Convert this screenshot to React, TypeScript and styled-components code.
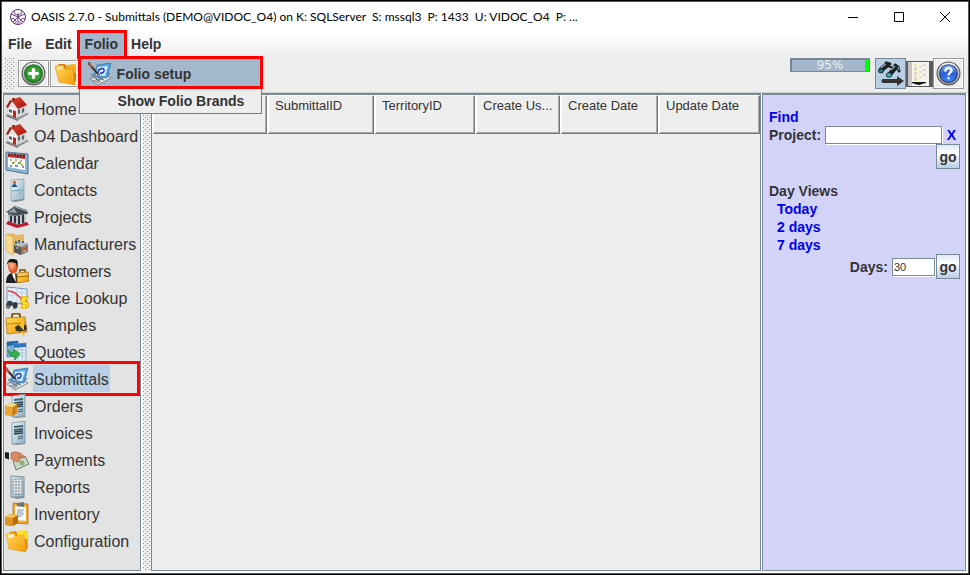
import React from "react";
import styled, { createGlobalStyle, css } from "styled-components";

const GlobalStyle = createGlobalStyle`
  *, *::before, *::after { box-sizing: border-box; }
  html, body, #root { height: 100%; }
  body { margin: 0; font-family: "Liberation Sans", Arial, sans-serif; color: #333; }
  button, input { font: inherit; color: inherit; }
  a { color: #0000f0; text-decoration: none; }
`;

const steel = "#7a8a99";
const selection = "#b8cfe5";
const menuBlue = "#a3b8cc";

const Window = styled.div`
  display: flex;
  flex-direction: column;
  height: 100vh;
  border: 1px solid #000;
  outline: 1px solid #555;
  outline-offset: -2px;
  padding: 1px;
  background: #eee;
`;

const TitleBar = styled.header`
  display: flex;
  align-items: center;
  height: 30px;
  padding-left: 7px;
  background: #fff;
`;

const Title = styled.h1`
  flex: 1;
  margin: 0 0 0 4px;
  font: 400 12px/20px Lato, "Open Sans", sans-serif;
  color: #000;
  white-space: pre;
`;

const CaptionButton = styled.button`
  display: grid;
  place-items: center;
  width: 46px;
  height: 28px;
  padding: 0;
  border: 0;
  background: none;
`;

const MenuBar = styled.nav`
  display: flex;
  height: 25px;
  background: linear-gradient(#fff, #eee);
`;

const MenuAnchor = styled.div`
  position: relative;
`;

const redFrame = css`
  &::after {
    content: "";
    position: absolute;
    inset: -2px;
    border: 3px solid #f00;
    pointer-events: none;
  }
`;

const MenuButton = styled.button<{ $open?: boolean }>`
  position: relative;
  height: 25px;
  padding: 0 7px 2px 6px;
  border: 0;
  background: ${(p) => (p.$open ? menuBlue : "none")};
  font-size: 14px;
  font-weight: 700;
  ${(p) => p.$open && redFrame}
`;

const Popup = styled.div`
  position: absolute;
  z-index: 2;
  top: 25px;
  left: 0;
  width: 183px;
  border: 1px solid #6382bf;
  background: #eee;
`;

const PopupItem = styled.button<{ $active?: boolean }>`
  position: relative;
  display: flex;
  align-items: center;
  gap: 5px;
  width: 100%;
  height: ${(p) => (p.$active ? 29 : 26)}px;
  padding: ${(p) => (p.$active ? "2px 0 0 8px" : "2px 0 0 38px")};
  border: 0;
  background: ${(p) => (p.$active ? menuBlue : "none")};
  font-size: 14px;
  font-weight: 700;
  white-space: nowrap;
  ${(p) => p.$active && redFrame}
`;

const dots = css`
  background-image: conic-gradient(from 270deg at 1px 1px, #8492a2 25%, transparent 0),
    conic-gradient(from 270deg at 1px 1px, #8492a2 25%, transparent 0);
  background-size: 4px 4px;
  background-position: 0 0, 2px 2px;
`;

const ToolBar = styled.div`
  display: flex;
  align-items: flex-start;
  height: 36px;
  padding: 1px 4px 0 3px;
  border-bottom: 1px solid #ccc;
`;

const Grip = styled.div`
  width: 10px;
  height: 32px;
  margin-right: 3px;
  ${dots}
`;

const ToolButton = styled.button<{ $pressed?: boolean; $low?: boolean }>`
  display: grid;
  place-items: center;
  width: 31px;
  height: ${(p) => (p.$low ? 27 : 31)}px;
  margin: ${(p) => (p.$low ? "2px 1px 0 0" : "0")};
  padding: 0;
  border: 1px solid ${(p) => (p.$pressed ? steel : "#999")};
  background: ${(p) => (p.$pressed ? selection : "#eee")};
  box-shadow: ${(p) => (p.$pressed ? "none" : "inset 0 0 0 1px #fff")};
`;

const LedgerButton = styled.button`
  display: grid;
  place-items: center;
  width: 27px;
  height: 31px;
  padding: 0;
  border: 0;
  background: none;
`;

const Spacer = styled.div`
  flex: 1;
`;

const Meter = styled.div`
  width: 80px;
  height: 14px;
  margin-right: 5px;
  border: 1px solid ${steel};
  background: linear-gradient(to right, ${menuBlue} 74px, #0f0 74px);
  box-shadow: inset 1px 1px #6382bf;
  color: #eee;
  font: 12px/13px "DejaVu Sans", sans-serif;
  text-align: center;
`;

const Main = styled.main`
  display: flex;
  flex: 1;
  min-height: 0;
  background: #fff;
  padding: 0 2px 2px 1px;
`;

const Sidebar = styled.aside`
  flex: none;
  width: 138px;
  border: 1px solid ${steel};
  border-top-width: 2px;
  background: #e3e3e3;
`;

const NavList = styled.ul`
  margin: 0;
  padding: 0;
  list-style: none;
`;

const NavLink = styled.a<{ $selected?: boolean }>`
  position: relative;
  display: flex;
  align-items: center;
  gap: 4px;
  height: 27px;
  padding-left: 1px;
  color: #333;
  font-size: 16px;
  white-space: nowrap;
  ${(p) =>
    p.$selected &&
    css`
      &::after {
        content: "";
        position: absolute;
        inset: -4px 0 -4px -1px;
        border: 3px solid #f00;
      }
    `}
`;

const NavLabel = styled.span<{ $selected?: boolean }>`
  padding: 2px 1px 0 1px;
  line-height: 25px;
  background: ${(p) => (p.$selected ? selection : "none")};
`;

const Divider = styled.div`
  flex: none;
  width: 8px;
  margin-left: 2px;
  border-top: 2px solid ${steel};
  background-color: #eee;
  ${dots}
`;

const TablePane = styled.section`
  flex: 1;
  min-width: 0;
  border: 1px solid ${steel};
  border-top-width: 2px;
  background: #eee;
`;

const Grid = styled.table`
  width: 100%;
  table-layout: fixed;
  border-collapse: separate;
  border-spacing: 0;
`;

const HeadCell = styled.th`
  height: 39px;
  padding: 2px 6px;
  overflow: hidden;
  border: solid;
  border-width: 1px 1px 1px 2px;
  border-color: #fff #777 #777 #fff;
  box-shadow: inset -1px -1px #aaa;
  font-size: 13px;
  font-weight: 400;
  line-height: 15px;
  text-align: left;
  text-overflow: ellipsis;
  vertical-align: top;
  white-space: nowrap;
`;

const FindPane = styled.aside`
  flex: none;
  width: 204px;
  margin-left: 1px;
  padding: 13px 5px 12px 6px;
  border: 1px solid ${steel};
  border-top-width: 2px;
  background: #d3d3fa;
  font-size: 14px;
  font-weight: 700;
  line-height: 18px;
`;

const Heading = styled.h2<{ $link?: boolean }>`
  margin: 0;
  font-size: 14px;
  line-height: 18px;
  color: ${(p) => (p.$link ? "#0000f0" : "#333")};
`;

const Line = styled.div<{ $end?: boolean }>`
  display: flex;
  align-items: center;
  justify-content: ${(p) => (p.$end ? "flex-end" : "flex-start")};
`;

const TextBox = styled.input<{ $short?: boolean }>`
  flex: ${(p) => (p.$short ? "none" : "1")};
  width: ${(p) => (p.$short ? 43 : 60)}px;
  min-width: 0;
  height: 18px;
  margin-left: 4px;
  padding: 0 1px;
  border: 1px solid ${steel};
  border-radius: 0;
  box-shadow: 1px 1px #fff;
  background: #fff;
  font-size: 11px;
  font-weight: 400;
`;

const ClearLink = styled.a`
  padding: 0 4px 0 5px;
`;

const GoButton = styled.button`
  width: 24px;
  height: 25px;
  margin-left: 1px;
  padding: 0;
  border: 1px solid ${steel};
  background: linear-gradient(#dde8f3, #fff 35%, ${selection});
  font-weight: 700;
`;

const DayViews = styled.div`
  margin-top: 13px;
`;

const DayList = styled.ul`
  margin: 0;
  padding: 0 0 0 8px;
  list-style: none;
`;

/* ---------- drawings ---------- */

const Svg = styled.svg`
  display: block;
  flex: none;
`;

const HiddenSvg = styled.svg`
  position: absolute;
`;

function Icon({ children, size = 24 }: { children: React.ReactNode; size?: number }) {
  return (
    <Svg width={size} height={size} viewBox="0 0 24 24" aria-hidden="true">
      {children}
    </Svg>
  );
}

function Gradients() {
  return (
    <HiddenSvg width="0" height="0" aria-hidden="true">
      <defs>
        <linearGradient id="gold" x1="0" y1="0" x2="1" y2="1">
          <stop offset="0" stopColor="#ffd95a" />
          <stop offset="1" stopColor="#f39a08" />
        </linearGradient>
        <linearGradient id="paper" x1="0" y1="0" x2="1" y2="1">
          <stop offset="0" stopColor="#eaf4f8" />
          <stop offset="1" stopColor="#8fb0c1" />
        </linearGradient>
        <linearGradient id="roof" x1="0" y1="0" x2="1" y2="1">
          <stop offset="0" stopColor="#e04a36" />
          <stop offset="1" stopColor="#a01008" />
        </linearGradient>
        <radialGradient id="green">
          <stop offset="0" stopColor="#5fc64c" />
          <stop offset="1" stopColor="#1c8f22" />
        </radialGradient>
        <linearGradient id="blue" x1="0" y1="0" x2="0" y2="1">
          <stop offset="0" stopColor="#8db4f5" />
          <stop offset="0.5" stopColor="#2b5fd6" />
          <stop offset="1" stopColor="#3f86f5" />
        </linearGradient>
        <linearGradient id="silver" x1="0" y1="0" x2="0" y2="1">
          <stop offset="0" stopColor="#f6f6f6" />
          <stop offset="1" stopColor="#8a8a8a" />
        </linearGradient>
        <radialGradient id="skin" cx="0.4" cy="0.4">
          <stop offset="0" stopColor="#ffc09a" />
          <stop offset="1" stopColor="#e0521c" />
        </radialGradient>
      </defs>
    </HiddenSvg>
  );
}

const Home = () => (
  <Icon>
    <path d="M1 18l12 5 11-6-11-5z" fill="#8d908b" />
    <path d="M1 18l12 5v1L1 19z" fill="#55585a" />
    <path d="M3 9l9 2v10l-9-4z" fill="#fafafa" stroke="#aaa" strokeWidth=".5" />
    <path d="M12 11l9-3v9l-9 4z" fill="#d4d4d4" />
    <path d="M2 9l4-6 7 7-1 2z" fill="#e4e4e4" />
    <path d="M6 3l9-3 7 8-9 4z" fill="url(#roof)" />
    <path d="M1 10l4-7 2 1-4 7z" fill="#9f1d13" />
    <path d="M7 1h3v3L7 5z" fill="#a03022" />
    <path d="M8 13l3 1v7l-3-1z" fill="#c3261b" />
    <path d="M4 12l3 1v3l-3-1zM13 13l2-1v4l-2 1zM17 12l2-1v4l-2 1z" fill="#56616a" />
  </Icon>
);

const Calendar = () => (
  <Icon>
    <path d="M1 1l22 2v20L1 19z" fill="#8fb3cd" stroke="#4d7998" />
    <path d="M3 5l17 1v13L3 16z" fill="#fff" />
    <path d="M3 3l17 1v4L3 6z" fill="#c62c22" />
    <path d="M4 2v3M7 2v3M10 2v3M13 3v3M16 3v3M19 3v3" stroke="#222" strokeWidth="1" />
    <path d="M5 9h2M10 9h2M15 10h2" stroke="#e99" strokeWidth="2" />
    <path d="M7 12h2M13 12h3" stroke="#6cb350" strokeWidth="2" />
    <path d="M5 15h2M10 15h3M17 16h2" stroke="#6f9dd4" strokeWidth="2" />
    <path d="M9 11h1M16 14h2" stroke="#e7a42e" strokeWidth="2" />
  </Icon>
);

const Contacts = () => (
  <Icon>
    <path d="M6 2l13-1v20l-13 2z" fill="url(#paper)" stroke="#7f9dae" strokeWidth=".7" />
    <path d="M7 3h5v9H7z" fill="#d5e8f2" />
    <circle cx="9.500" cy="4.500" r="1.700" fill="#d8612c" />
    <path d="M7 9c0-4 5-4 5 0z" fill="#27508a" />
    <path d="M7 13l11-1M15 14v2" stroke="#6fa0bb" />
    <path d="M6 23l13-2 1 1-10 2z" fill="#7c8489" />
  </Icon>
);

const Projects = () => (
  <Icon>
    <path d="M1 19l11 4 12-3-2-3-9 2-10-3z" fill="#c3182b" />
    <path d="M3 8h18v10l-9 2-9-4z" fill="#71797f" />
    <path d="M1 7l9-6 12 4 1 4-13 1z" fill="#464e55" />
    <path d="M3 7l6-4 3 5z" fill="#9ba4aa" />
    <path d="M4 10v6M8 11v7M12 11v8M16 10v9M20 9v8" stroke="#bcc4c9" strokeWidth="2" />
    <path d="M6 11v6M10 11v7M14 11v8M18 10v8" stroke="#30363c" strokeWidth="2" />
    <path d="M10 2l12 4" stroke="#aeb6bb" />
  </Icon>
);

const Manufacturers = () => (
  <Icon>
    <path d="M1 2l8-1 2 2 8-1v19H7z" fill="#e5b863" />
    <path d="M1 2l7 3v18l-7-4z" fill="#f7d993" stroke="#c39743" strokeWidth=".5" />
    <path d="M9 13l7-3 7 2v8l-7 3-7-3z" fill="#8c8176" />
    <path d="M9 13l7 2v8l-7-3z" fill="#5c5650" />
    <path d="M9 13l7-3 7 2-7 3z" fill="#b7bec1" />
    <path d="M16 17l7-2v2l-7 3z" fill="#be5a36" />
    <path d="M11 12v-3M14 11V8M18 11V9" stroke="#4b707e" strokeWidth="2" />
    <path d="M11 16h3M18 19h3" stroke="#b5d0d8" />
  </Icon>
);

const Customers = () => (
  <Icon>
    <path d="M1 24c0-7 3-10 7-10s7 3 7 10z" fill="#202024" />
    <path d="M7 14h3l1 9-3-5z" fill="#fff" />
    <ellipse cx="8" cy="7.500" rx="5" ry="7" fill="url(#skin)" />
    <path d="M2 6C2-1 8-1 12 1c1 2 1 5 0 7l-1-4-7-1z" fill="#17171a" />
    <path d="M12 14l11-1 1 9-12 2z" fill="url(#gold)" stroke="#9d6a0a" strokeWidth=".7" />
    <path d="M15 13v-2h5v2" fill="none" stroke="#76500c" strokeWidth="1.500" />
    <path d="M12 18l12-1" stroke="#9d6a0a" />
  </Icon>
);

const PriceLookup = () => (
  <Icon>
    <path d="M2 1l20 2v16L2 15z" fill="#e3eef6" stroke="#7898b0" />
    <path d="M2 5l20 2M2 9l20 2M7 2v14M12 2v15M17 3v15" stroke="#b4cddd" strokeWidth=".7" />
    <path d="M3 5c7 0 11 4 15 11" fill="none" stroke="#de3d43" strokeWidth="1.500" />
    <path d="M1 21c0-5 2-7 5-6l2 2 3-1c2 1 2 3 1 6l-3 1-2-4-3 3z" fill="#33393e" />
    <circle cx="3" cy="21" r="2" fill="#67717a" />
    <path d="M23 13c-6-3-8 3-3 4s2 5-4 3M19 10v13" fill="none" stroke="#d99708" strokeWidth="4" />
    <path d="M23 13c-6-3-8 3-3 4s2 5-4 3M19 10v13" fill="none" stroke="#ffe234" strokeWidth="2" />
  </Icon>
);

const Samples = () => (
  <Icon>
    <path d="M7 5V2c0-2 8-2 8 0v3" fill="none" stroke="#8a5a10" strokeWidth="2" />
    <path d="M1 5l19-1 2 15-20 2z" fill="url(#gold)" stroke="#a66b0b" strokeWidth=".7" />
    <path d="M1 11l20-1" stroke="#c17f12" />
    <path d="M10 14l5-3 6 1 1 4-4 3-7-1z" fill="#37342a" />
    <path d="M15 12l3-2v5zM17 18l2 5" stroke="#f5c82b" strokeWidth="2" fill="#f5c82b" />
  </Icon>
);

const Quotes = () => (
  <Icon>
    <path d="M2 2l11-1v15l-11 1z" fill="#7fb0d8" stroke="#3f6f9b" strokeWidth=".7" />
    <path d="M2 2l11-1v4L2 6z" fill="#2467ac" />
    <path d="M9 4l12-1v18l-12 1z" fill="#e4eff6" stroke="#6f99b7" strokeWidth=".7" />
    <path d="M9 4l12-1v4L9 8z" fill="#2e77be" />
    <path d="M11 10h9M11 13h9M11 16h9M13 8v13M17 8v13" stroke="#9bbbd0" strokeWidth=".8" />
    <path d="M3 10c2 2 4 3 6 2V9l6 5-5 6v-3c-4 0-7-3-7-7z" fill="#38b34a" stroke="#19782a" strokeWidth=".6" />
  </Icon>
);

const Submittals = () => (
  <Icon>
    <path d="M2 17l13-6 8 5-13 7z" fill="#dfe6ea" stroke="#67767e" strokeWidth=".8" />
    <path d="M3 13l13-6 6 5-12 7z" fill="#93a8b4" stroke="#53636c" strokeWidth=".6" />
    <path d="M9 3l14-2-4 15-13-2z" fill="#4ba4e8" stroke="#3d6e93" strokeWidth=".7" />
    <path d="M10 5l10-1-3 10-9-1z" fill="#d8eefb" />
    <path d="M10 11c0-5 7-6 6-2-1 3-4 3-3 1" fill="none" stroke="#2741b8" strokeWidth="1.600" />
    <path d="M1 0l8 10 3 3-3-1L0 2z" fill="#35221c" stroke="#5a3a2c" strokeWidth=".6" />
    <path d="M1 1l3 4" stroke="#b5664a" strokeWidth="1.500" />
    <path d="M5 18l6 3M8 17l5 3M11 16l5 2" stroke="#59646b" strokeWidth=".9" />
  </Icon>
);

const DocumentShape = () => (
  <>
    <path d="M7 2l13-2v22l-13 1z" fill="url(#paper)" stroke="#6f8d9c" strokeWidth=".7" />
    <path d="M9 5l9-1v2L9 7z" fill="#3d6470" />
    <path d="M9 9l9-1M9 11l9-1M9 13l9-1" stroke="#2c4752" strokeWidth="1.300" />
    <path d="M13 16l5-1M13 18l5-1" stroke="#456874" />
    <path d="M7 23l13-1 1 1-9 1z" fill="#8c9499" />
  </>
);

const Orders = () => (
  <Icon>
    <DocumentShape />
    <path d="M0 12l4-3 8 1v9l-4 3-8-1z" fill="#cf8316" />
    <path d="M0 12l8 1v9l-8-1z" fill="#eca535" />
    <path d="M0 12l4-3 8 1-4 3z" fill="#fad989" />
    <path d="M8 13v9" stroke="#a8640a" strokeWidth=".7" />
  </Icon>
);

const Invoices = () => (
  <Icon>
    <DocumentShape />
  </Icon>
);

const Payments = () => (
  <Icon>
    <path d="M0 4l5 1v7l-5-2z" fill="#1c1d22" />
    <path d="M4 5h2v7H4z" fill="#e8e8ea" />
    <path d="M8 13l12-5 4 8-13 6z" fill="#c9dac0" stroke="#4d6a47" strokeWidth=".8" />
    <circle cx="17" cy="15" r="2.500" fill="#8eac84" />
    <path d="M6 5c5-2 9-1 14 4l-2 1-4-2c2 3 1 5-1 6-3 0-5-3-7-3z" fill="#d98a62" stroke="#9c5535" strokeWidth=".6" />
  </Icon>
);

const Reports = () => (
  <Icon>
    <path d="M6 1l13 1v20H6z" fill="url(#paper)" stroke="#5f7985" strokeWidth=".8" />
    <path d="M8 4h9v15H8z" fill="#fff" />
    <path d="M8 4h9M8 7h9M8 10h9M8 13h9M8 16h9M8 19h9M8 4v15M11 4v15M14 4v15M17 4v15" stroke="#7d8c94" strokeWidth=".8" />
    <path d="M5 22h14l1 1-8 1z" fill="#8c9499" />
  </Icon>
);

const Inventory = () => (
  <Icon>
    <path d="M8 1l15 1v20l-15-1z" fill="#efa92c" stroke="#a9680a" strokeWidth=".7" />
    <path d="M10 4l11 1v14l-11-1z" fill="#f4f8fa" />
    <path d="M12 1l7-1v5l-7-1z" fill="#6b7880" />
    <path d="M12 8h7M12 10h6M12 12h7M12 14h5" stroke="#8698a3" />
    <path d="M0 15l5-3 8 1v8l-5 3-8-1z" fill="#b96c0c" />
    <path d="M0 15l8 1v8l-8-1z" fill="#df9424" />
    <path d="M0 15l5-3 8 1-5 3z" fill="#f6c45e" />
  </Icon>
);

const Folder = () => (
  <Icon>
    <path d="M4 3l7-1 1 2 10-2 1 17-3 3z" fill="#e69107" />
    <path d="M12 2l8-1 2 3v6H12z" fill="#ffe02d" />
    <path d="M1 5l8-1 2 3 8-1 2 17L4 20z" fill="url(#gold)" stroke="#e59208" strokeWidth=".5" />
    <path d="M3 6l5-1 1 3-6 1z" fill="#fff5d8" />
  </Icon>
);

const OpenFolder = () => (
  <Icon>
    <path d="M4 2h7l1 2h10v15l-2 3z" fill="#cf7c07" />
    <path d="M12 3l9-1 1 3v6H12z" fill="#f5ae22" />
    <path d="M1 4l8-1 2 4 8 0 2 16L5 20z" fill="url(#gold)" stroke="#d98508" strokeWidth=".5" />
    <path d="M3 5l5-1 1 3-6 1z" fill="#ffe6a3" />
  </Icon>
);

const Add = () => (
  <Icon size={25}>
    <circle cx="12" cy="12" r="11" fill="url(#silver)" stroke="#555" />
    <circle cx="12" cy="12" r="8.500" fill="url(#green)" stroke="#226b25" />
    <path d="M12 7v10M7 12h10" stroke="#fff" strokeWidth="3" />
  </Icon>
);

const Help = () => (
  <Icon size={25}>
    <circle cx="12" cy="12" r="11" fill="url(#silver)" stroke="#555" />
    <circle cx="12" cy="12" r="8.500" fill="url(#blue)" stroke="#27407c" />
    <path d="M9 10c0-4 6-4 6-1 0 2-3 2-3 5M12 15.500v2" fill="none" stroke="#fff" strokeWidth="2.200" />
  </Icon>
);

const Binoculars = () => (
  <Svg width="27" height="27" viewBox="0 0 27 27" aria-hidden="true">
    <g fill="none" stroke="#1d2224" strokeLinecap="round">
      <path d="M4 10l6-5" strokeWidth="5" />
      <path d="M13 14l5-6" strokeWidth="5" />
      <path d="M9 3l4 1M18 5l3 2 1 4" strokeWidth="3" />
      <path d="M11 6l5 2" strokeWidth="2" />
    </g>
    <path d="M4 8l5-4M14 10l4-4M21 7l1 3" stroke="#8aa5a9" strokeWidth="1.200" fill="none" />
    <ellipse cx="4" cy="11" rx="2.500" ry="2" fill="#2c7f8a" stroke="#1e292d" />
    <ellipse cx="12" cy="15" rx="2.800" ry="2.200" fill="#43b4c2" stroke="#1e292d" />
    <path d="M6 19h14v-3l7 5-7 5v-3H6c-2 0-2-4 0-4z" fill="#333" />
  </Svg>
);

const Ledger = () => (
  <Svg width="27" height="26" viewBox="0 0 27 26" aria-hidden="true">
    <path d="M0 0h27v26H0z" fill="#5c5c5c" />
    <path d="M2 1h21v24H2z" fill="#f4f4f0" />
    <path d="M2 1h4v24H2z" fill="#c4c4c4" />
    <path d="M8 4h3M8 9h3M8 14h3M8 19h3M13 6h3M13 11h3M13 16h3" stroke="#e8e5a0" strokeWidth="2" />
    <path d="M17 4h3M17 9h3M17 14h3M8 7h3M8 12h3M8 17h3" stroke="#e6cfd4" strokeWidth="2" />
    <path d="M6 21h14v1l-4 1-3 1-4-1-3-1z" fill="#111" />
  </Svg>
);

const Logo = () => (
  <Svg width="18" height="18" viewBox="0 0 18 18" fill="none" stroke="#5b2a72" aria-hidden="true">
    <circle cx="9" cy="9" r="7.500" />
    <path
      d="M9 5v11M2 6l7 3 7-3M4 14l5-5 5 5M5 3c0 3 2 4 4 4s4-1 4-4M2 11c3-1 5 0 5 4M16 11c-3-1-5 0-5 4"
      strokeWidth=".9"
    />
  </Svg>
);

const navItems: [string, React.ComponentType][] = [
  ["Home", Home],
  ["O4 Dashboard", Home],
  ["Calendar", Calendar],
  ["Contacts", Contacts],
  ["Projects", Projects],
  ["Manufacturers", Manufacturers],
  ["Customers", Customers],
  ["Price Lookup", PriceLookup],
  ["Samples", Samples],
  ["Quotes", Quotes],
  ["Submittals", Submittals],
  ["Orders", Orders],
  ["Invoices", Invoices],
  ["Payments", Payments],
  ["Reports", Reports],
  ["Inventory", Inventory],
  ["Configuration", Folder],
];

const columns: [string, number][] = [
  ["", 115],
  ["SubmittalID", 107],
  ["TerritoryID", 101],
  ["Create Us...", 85],
  ["Create Date", 98],
  ["Update Date", 102],
];

export default function App() {
  return (
    <Window>
      <GlobalStyle />
      <Gradients />
      <TitleBar>
        <Logo />
        <Title>{"OASIS 2.7.0 - Submittals (DEMO@VIDOC_O4) on K: SQLServer  S: mssql3  P: 1433  U: VIDOC_O4  P: ..."}</Title>
        <CaptionButton aria-label="Minimize">
          <Svg width="10" height="10" stroke="#000"><path d="M0 5.500h10" /></Svg>
        </CaptionButton>
        <CaptionButton aria-label="Maximize">
          <Svg width="10" height="10" stroke="#000" fill="none"><path d="M.5.5h9v9h-9z" /></Svg>
        </CaptionButton>
        <CaptionButton aria-label="Close">
          <Svg width="10" height="10" stroke="#000"><path d="M0 0l10 10M10 0L0 10" /></Svg>
        </CaptionButton>
      </TitleBar>

      <MenuBar>
        <MenuButton>File</MenuButton>
        <MenuButton>Edit</MenuButton>
        <MenuAnchor>
          <MenuButton $open aria-expanded="true">Folio</MenuButton>
          <Popup role="menu">
            <PopupItem $active role="menuitem"><Submittals />Folio setup</PopupItem>
            <PopupItem role="menuitem">Show Folio Brands</PopupItem>
          </Popup>
        </MenuAnchor>
        <MenuButton>Help</MenuButton>
      </MenuBar>

      <ToolBar>
        <Grip />
        <ToolButton $low aria-label="Add"><Add /></ToolButton>
        <ToolButton $low aria-label="Open"><OpenFolder /></ToolButton>
        <Spacer />
        <Meter role="progressbar" aria-label="Memory" aria-valuenow={95}>95%</Meter>
        <ToolButton $pressed aria-label="Find"><Binoculars /></ToolButton>
        <LedgerButton aria-label="Ledger"><Ledger /></LedgerButton>
        <ToolButton aria-label="Help"><Help /></ToolButton>
      </ToolBar>

      <Main>
        <Sidebar>
          <NavList>
            {navItems.map(([label, Glyph]) => {
              const selected = label === "Submittals";
              return (
                <li key={label}>
                  <NavLink href="#" $selected={selected}>
                    <Glyph />
                    <NavLabel $selected={selected}>{label}</NavLabel>
                  </NavLink>
                </li>
              );
            })}
          </NavList>
        </Sidebar>
        <Divider />
        <TablePane>
          <Grid>
            <colgroup>
              {columns.map(([name, width]) => (
                <col key={name} width={width} />
              ))}
            </colgroup>
            <thead>
              <tr>
                {columns.map(([name]) => (
                  <HeadCell key={name} scope="col">{name}</HeadCell>
                ))}
              </tr>
            </thead>
          </Grid>
        </TablePane>
        <FindPane>
          <Heading $link>Find</Heading>
          <Line>
            <label htmlFor="project">Project:</label>
            <TextBox id="project" />
            <ClearLink href="#">X</ClearLink>
          </Line>
          <Line $end>
            <GoButton>go</GoButton>
          </Line>
          <DayViews>
            <Heading>Day Views</Heading>
            <DayList>
              <li><a href="#">Today</a></li>
              <li><a href="#">2 days</a></li>
              <li><a href="#">7 days</a></li>
            </DayList>
            <Line $end>
              <label htmlFor="days">Days:</label>
              <TextBox id="days" $short defaultValue="30" />
              <GoButton>go</GoButton>
            </Line>
          </DayViews>
        </FindPane>
      </Main>
    </Window>
  );
}
